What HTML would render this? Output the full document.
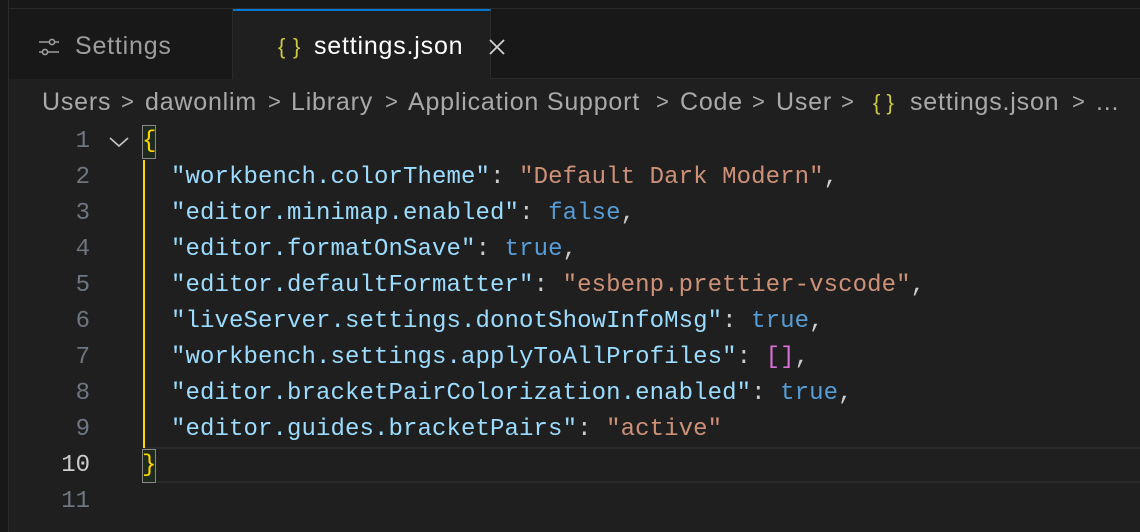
<!DOCTYPE html>
<html><head><meta charset="utf-8"><style>
*{margin:0;padding:0;box-sizing:border-box}
body{width:1140px;height:532px;background:#1f1f1f;overflow:hidden;position:relative;font-family:"Liberation Sans",sans-serif}
.abs{position:absolute;white-space:pre}
#top{left:0;top:0;width:1140px;height:9px;background:#181818;border-bottom:1px solid #2b2b2b}
#left{left:0;top:0;width:9px;height:532px;background:#181818;border-right:1px solid #2b2b2b}
#tabbar{left:9px;top:9px;width:1131px;height:70px;background:#181818;border-bottom:1px solid #2b2b2b}
#tab1{left:9px;top:9px;width:224px;height:70px;background:#181818;border-right:1px solid #2b2b2b}
#tab2{left:233px;top:9px;width:258px;height:70px;background:#1f1f1f;border-top:2px solid #0078d4;border-right:1px solid #2b2b2b}
.tabt{font-size:25px;top:32px;letter-spacing:0.8px}
.bc{font-size:25px;top:88px;color:#a9a9a9;letter-spacing:0.8px}
.ch{font-size:22px;top:89px;color:#a9a9a9}
.code{font-family:"Liberation Mono",monospace;font-size:24px;line-height:36px;letter-spacing:0.1px}
.ln{left:40px;width:50px;text-align:right;color:#6e7681;letter-spacing:0}
.k{color:#9cdcfe}.s{color:#ce9178}.b{color:#569cd6}.p{color:#cccccc}.m{color:#da70d6}
</style></head><body>
<div class="abs" id="top"></div>
<div class="abs" id="tabbar"></div>
<div class="abs" id="left"></div>
<div class="abs" id="tab1"></div>
<div class="abs" id="tab2"></div>
<svg class="abs" style="left:37px;top:35px" width="24" height="24" viewBox="0 0 24 24"><g stroke="#9d9d9d" stroke-width="1.6" fill="none"><line x1="2" y1="7" x2="22" y2="7"/><line x1="2" y1="17" x2="22" y2="17"/><circle cx="15" cy="7" r="2.6" fill="#181818"/><circle cx="8" cy="17" r="2.6" fill="#181818"/></g></svg>
<div class="abs tabt" style="left:75px;color:#9d9d9d">Settings</div>
<div class="abs tabt" style="left:278px;color:#cbcb41;font-size:22px;top:34px">{ }</div>
<div class="abs tabt" style="left:314px;color:#ffffff">settings.json</div>
<svg class="abs" style="left:487px;top:37px" width="20" height="20" viewBox="0 0 20 20"><path d="M3 3L17 17M17 3L3 17" stroke="#d0d0d0" stroke-width="1.8"/></svg>

<div class="abs bc" style="left:42px">Users</div><div class="abs ch" style="left:121px">&gt;</div>
<div class="abs bc" style="left:145px">dawonlim</div><div class="abs ch" style="left:268px">&gt;</div>
<div class="abs bc" style="left:291px">Library</div><div class="abs ch" style="left:385px">&gt;</div>
<div class="abs bc" style="left:408px">Application Support</div><div class="abs ch" style="left:656px">&gt;</div>
<div class="abs bc" style="left:680px">Code</div><div class="abs ch" style="left:752px">&gt;</div>
<div class="abs bc" style="left:776px">User</div><div class="abs ch" style="left:841px">&gt;</div>
<div class="abs bc" style="left:873px;color:#cbcb41;font-size:22px;top:90px;letter-spacing:0">{ }</div>
<div class="abs bc" style="left:910px">settings.json</div><div class="abs ch" style="left:1072px">&gt;</div>
<div class="abs bc" style="left:1096px">...</div>

<div class="abs" style="left:143px;top:447px;width:997px;height:36px;border-top:2px solid #282828;border-bottom:2px solid #282828"></div>
<div class="abs" style="left:143px;top:160px;width:2px;height:288px;background:#ffd700"></div>
<div class="abs" style="left:142px;top:125px;width:14px;height:34px;border:1px solid #888;background:#1e2a1e"></div>
<div class="abs" style="left:142px;top:449px;width:14px;height:34px;border:1px solid #888;background:#1e2a1e"></div>
<svg class="abs" style="left:108px;top:134px" width="22" height="16" viewBox="0 0 22 16"><path d="M2 4L11 12L20 4" stroke="#c5c5c5" stroke-width="1.6" fill="none"/></svg>

<div class="abs code ln" style="top:124px">1</div>
<div class="abs code ln" style="top:160px">2</div>
<div class="abs code ln" style="top:196px">3</div>
<div class="abs code ln" style="top:232px">4</div>
<div class="abs code ln" style="top:268px">5</div>
<div class="abs code ln" style="top:304px">6</div>
<div class="abs code ln" style="top:340px">7</div>
<div class="abs code ln" style="top:376px">8</div>
<div class="abs code ln" style="top:412px">9</div>
<div class="abs code ln" style="top:448px;color:#cccccc">10</div>
<div class="abs code ln" style="top:484px">11</div>

<div class="abs code" style="left:142px;top:124px;color:#ffd700">{</div>
<div class="abs code" style="left:171px;top:160px"><span class="k">"workbench.colorTheme"</span><span class="p">: </span><span class="s">"Default Dark Modern"</span><span class="p">,</span></div>
<div class="abs code" style="left:171px;top:196px"><span class="k">"editor.minimap.enabled"</span><span class="p">: </span><span class="b">false</span><span class="p">,</span></div>
<div class="abs code" style="left:171px;top:232px"><span class="k">"editor.formatOnSave"</span><span class="p">: </span><span class="b">true</span><span class="p">,</span></div>
<div class="abs code" style="left:171px;top:268px"><span class="k">"editor.defaultFormatter"</span><span class="p">: </span><span class="s">"esbenp.prettier-vscode"</span><span class="p">,</span></div>
<div class="abs code" style="left:171px;top:304px"><span class="k">"liveServer.settings.donotShowInfoMsg"</span><span class="p">: </span><span class="b">true</span><span class="p">,</span></div>
<div class="abs code" style="left:171px;top:340px"><span class="k">"workbench.settings.applyToAllProfiles"</span><span class="p">: </span><span class="m">[]</span><span class="p">,</span></div>
<div class="abs code" style="left:171px;top:376px"><span class="k">"editor.bracketPairColorization.enabled"</span><span class="p">: </span><span class="b">true</span><span class="p">,</span></div>
<div class="abs code" style="left:171px;top:412px"><span class="k">"editor.guides.bracketPairs"</span><span class="p">: </span><span class="s">"active"</span></div>
<div class="abs code" style="left:142px;top:448px;color:#ffd700">}</div>
</body></html>
